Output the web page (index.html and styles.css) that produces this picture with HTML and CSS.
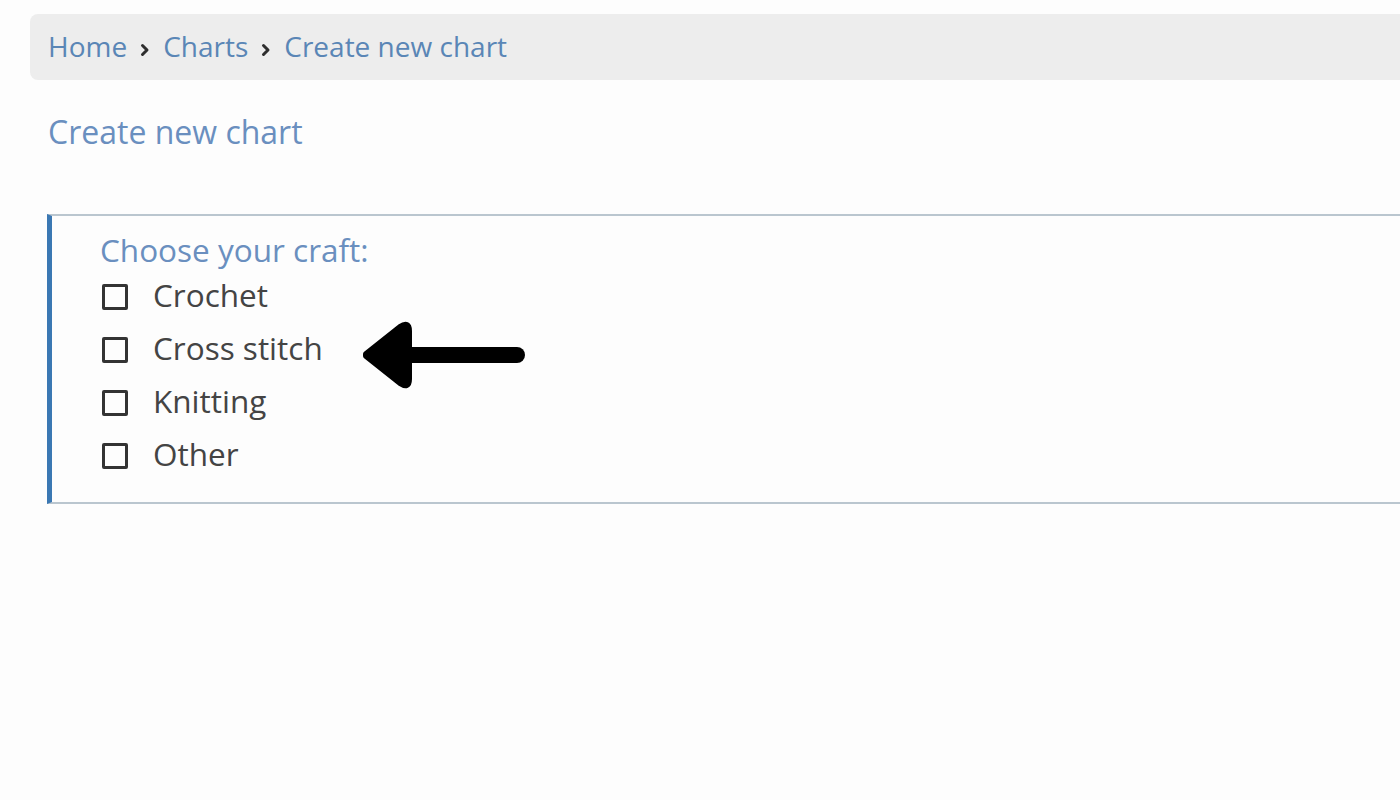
FILE: index.html
```html
<!DOCTYPE html>
<html>
<head>
<meta charset="utf-8">
<link rel="stylesheet" href="styles.css">
</head>
<body>
<nav class="crumbs">
  <a class="crumb" href="#">Home</a>
  <svg class="sep" viewBox="0 0 10 14" width="10" height="14"><path d="M2.5 2.5 L7 7 L2.5 11.5" fill="none" stroke="#2e2e2e" stroke-width="3" stroke-linecap="round" stroke-linejoin="round"/></svg>
  <a class="crumb" href="#">Charts</a>
  <svg class="sep" viewBox="0 0 10 14" width="10" height="14"><path d="M2.5 2.5 L7 7 L2.5 11.5" fill="none" stroke="#2e2e2e" stroke-width="3" stroke-linecap="round" stroke-linejoin="round"/></svg>
  <a class="crumb" href="#">Create new chart</a>
</nav>
<h1 class="title">Create new chart</h1>
<section class="panel">
  <div class="legend">Choose your craft:</div>
  <ul class="options">
    <li class="option"><span class="box"></span><span class="label">Crochet</span></li>
    <li class="option"><span class="box"></span><span class="label">Cross stitch</span>
      <svg class="arrow" viewBox="0 0 170 70" width="170" height="70"><path d="M48 34 H159" stroke="#000" stroke-width="16" stroke-linecap="round"/><path d="M8 33 L42 6 Q51 0 51 10 L51 58 Q51 68 42 62 L8 35 Z" fill="#000" stroke="#000" stroke-width="6" stroke-linejoin="round"/></svg>
    </li>
    <li class="option"><span class="box"></span><span class="label">Knitting</span></li>
    <li class="option"><span class="box"></span><span class="label">Other</span></li>
  </ul>
</section>
</body>
</html>
```
FILE: styles.css
```css
html, body {
  margin: 0;
  padding: 0;
  background: #fdfdfd;
  font-family: "Open Sans", "Noto Sans", sans-serif;
}
body {
  padding-top: 14px;
  overflow: hidden;
}
.crumbs {
  margin-left: 30px;
  height: 66px;
  background: #ededed;
  border-radius: 8px 0 0 8px;
  display: flex;
  align-items: center;
  padding-left: 18px;
  gap: 13px;
}
.crumb {
  color: #5a86b6;
  text-decoration: none;
  font-size: 28px;
  line-height: 1;
  padding-bottom: 2px;
}
.sep {
  margin-top: 6px;
}
.title {
  margin: 32px 0 0 48px;
  font-weight: 400;
  font-size: 32px;
  line-height: 40px;
  color: #6a8fbf;
}
.panel {
  margin: 62px 0 0 47px;
  border-top: 2px solid #bac6cf;
  border-bottom: 2px solid #bac6cf;
  border-left: 5px solid #3b78b3;
  padding: 14px 0 20px 48px;
}
.legend {
  font-size: 31.5px;
  line-height: 40px;
  color: #6a8fbf;
}
.options {
  list-style: none;
  margin: 0;
  padding: 0;
}
.option {
  display: flex;
  align-items: center;
  height: 53px;
  position: relative;
}
.box {
  width: 20px;
  height: 20px;
  border: 3px solid #333;
  border-radius: 2px;
  margin-left: 2px;
  margin-right: 25px;
  flex: none;
}
.label {
  font-size: 31.5px;
  color: #444;
  line-height: 1;
  padding-bottom: 4px;
}
.arrow {
  position: absolute;
  left: 258px;
  top: -2px;
}
```
